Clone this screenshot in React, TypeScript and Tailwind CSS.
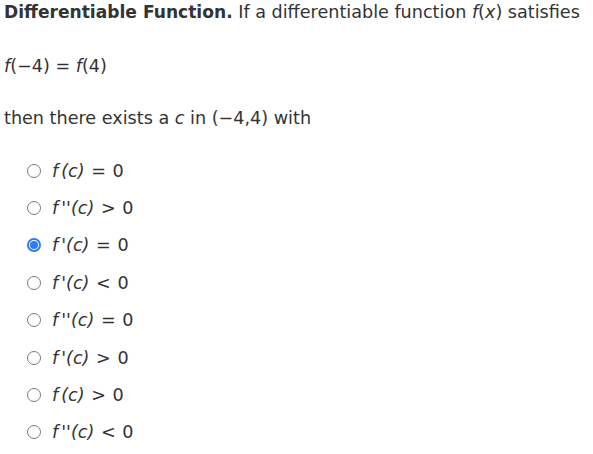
import React from "react";

const options = [
  { p: "", rel: "=", checked: false },
  { p: "''", rel: ">", checked: false },
  { p: "'", rel: "=", checked: true },
  { p: "'", rel: "<", checked: false },
  { p: "''", rel: "=", checked: false },
  { p: "'", rel: ">", checked: false },
  { p: "", rel: ">", checked: false },
  { p: "''", rel: "<", checked: false },
];

function Radio({ checked }: { checked: boolean }) {
  if (checked) {
    return (
      <span className="w-[14px] h-[14px] rounded-full border-[2px] border-[#2d7cf6] bg-white flex items-center justify-center shrink-0">
        <span className="w-[8px] h-[8px] rounded-full bg-[#2d7cf6]" />
      </span>
    );
  }
  return <span className="w-[14px] h-[14px] rounded-full border border-[#7a7a7a] bg-white shrink-0" />;
}

export default function App() {
  return (
    <div
      className="w-[593px] h-[454px] bg-white text-[#333] text-[17.6px] leading-[24px] px-[4px]"
      style={{ fontFamily: '"DejaVu Sans", Verdana, sans-serif' }}
    >
      <div className="pt-0 whitespace-nowrap">
        <span className="font-bold text-[17.1px]">Differentiable Function.</span> If a differentiable function{" "}
        <i>f</i>(<i>x</i>) satisfies
      </div>
      <div className="mt-[30px]">
        <i>f</i>(−4) = <i>f</i>(4)
      </div>
      <div className="mt-[28px]">
        then there exists a <i>c</i> in (−4,4) with
      </div>
      <div className="mt-[22px] flex flex-col">
        {options.map((o, i) => (
          <div key={i} className="flex items-center h-[37.4px] pl-[23px] gap-[11px]">
            <Radio checked={o.checked} />
            <span className="whitespace-nowrap">
              <i>
                <span className="mr-[3px]">f</span>
                {o.p}(c)
              </i>{" "}
              <span className="ml-[1px]">{o.rel}</span> <span className="ml-[1px]">0</span>
            </span>
          </div>
        ))}
      </div>
    </div>
  );
}
